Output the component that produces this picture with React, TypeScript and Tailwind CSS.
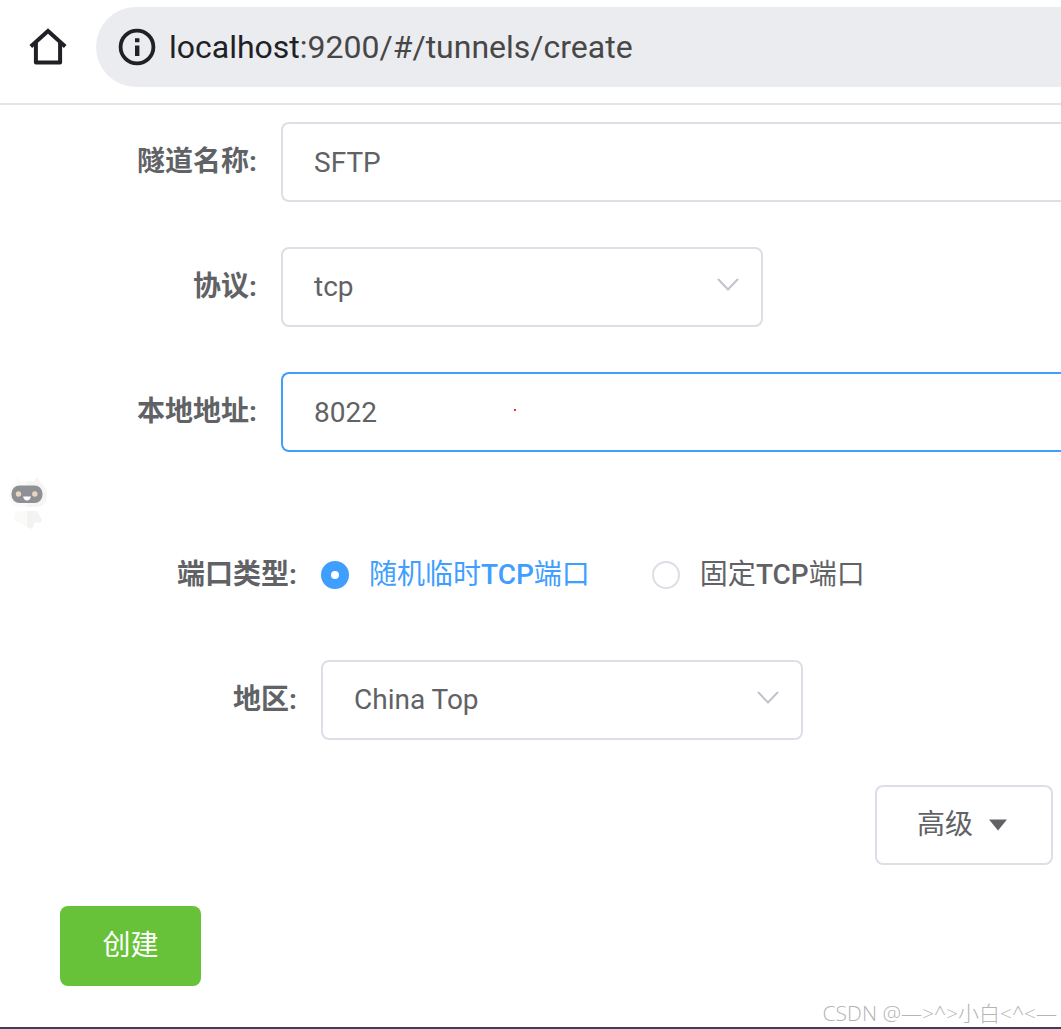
import { useState } from "react";
import type { ReactNode } from "react";

const protocols = ["tcp", "http", "udp"];
const regions = ["China Top", "China VIP", "United States"];
const portTypes = [
    { value: "random", prefix: "随机临时" },
    { value: "fixed", prefix: "固定" },
];

function AddressBar() {
    return (
        <header className="flex items-center border-b-2 border-[#e4e4e4] pt-[7px] pb-4">
            <a href="#/" aria-label="Home" className="flex w-24 shrink-0 justify-center">
                <svg width="38" height="38" viewBox="0 0 38 38" fill="none" stroke="#202124" strokeWidth="4" strokeLinejoin="round">
                    <path d="M1.8 18.6 19 3 36.2 18.6" strokeLinejoin="miter" />
                    <path d="M6.9 15V34.6H31.1V15" />
                </svg>
            </a>
            <div className="flex h-20 flex-1 items-center gap-[13px] rounded-l-full bg-[#ebecf0] pl-[22px]">
                <svg width="38" height="38" viewBox="0 0 38 38" className="shrink-0">
                    <circle cx="19" cy="19" r="16.4" fill="none" stroke="#202124" strokeWidth="3.8" />
                    <path d="M17 10.200h4.400v4h-4.400zM17 17.400h4.400v10.600h-4.400z" fill="#202124" />
                </svg>
                <span className="text-[32px] leading-10 whitespace-nowrap text-[#474747]">
                    <span className="text-[#202124]">localhost</span>:9200/#/tunnels/create
                </span>
            </div>
        </header>
    );
}

interface RowProps {
    label: string;
    htmlFor?: string;
    children: ReactNode;
}

function FormRow({ label, htmlFor, children }: RowProps) {
    return (
        <div className="flex gap-6">
            <label htmlFor={htmlFor} className="w-[257px] shrink-0 text-right font-bold leading-[80px]">
                {label}:
            </label>
            <div className="flex min-w-0 flex-1">{children}</div>
        </div>
    );
}

function TextField({ id, defaultValue, active }: { id: string; defaultValue: string; active?: boolean }) {
    return (
        <input
            id={id}
            type="text"
            defaultValue={defaultValue}
            className={`h-20 w-full rounded-l-lg border-2 border-r-0 bg-white pl-[31px] outline-none ${
                active ? "border-[#409eff]" : "border-[#dcdfe6]"
            }`}
        />
    );
}

function SelectField({ id, options }: { id: string; options: string[] }) {
    return (
        <div className="relative w-[482px]">
            <select id={id} className="h-20 w-full appearance-none rounded-lg border-2 border-[#dcdfe6] bg-white px-[31px] outline-none">
                {options.map((option) => (
                    <option key={option}>{option}</option>
                ))}
            </select>
            <svg
                width="22"
                height="14"
                viewBox="0 0 22 14"
                fill="none"
                stroke="#c0c4cc"
                strokeWidth="2"
                strokeLinecap="round"
                className="pointer-events-none absolute top-[31px] right-6"
            >
                <path d="M1.5 1.5 11 11.5 20.5 1.5" />
            </svg>
        </div>
    );
}

// Faded assistant that floats on the left edge
function Robot() {
    return (
        <svg width="38" height="54" viewBox="0 0 38 54" className="absolute top-[477px] left-[9px]">
            <path d="M6 6 8 1 12 4H25L28 0 31 5Q37 9 38 17Q38 30 26 30H10Q0 29 0 17Q1 9 6 6Z" fill="#fafaf9" />
            <path d="M18 4H25L28 0 31 5Q37 9 38 17Q38 30 26 30H18Z" fill="#f5f5f3" />
            <rect x="2.500" y="8.500" width="31" height="17.500" rx="8" fill="#8e9096" />
            <circle cx="9.500" cy="17" r="2.700" fill="#e9d6c1" />
            <circle cx="25.800" cy="17" r="2.700" fill="#e9d6c1" />
            <path d="M14 19.500H22Q21 23.500 18 23.500Q15 23.500 14 19.500Z" fill="#fff" />
            <path d="M5 37 10 34H18V50L5 43Z" fill="#fafaf9" />
            <path d="M18 34H28L33 43 31 46 26 45 23 52 18 50Z" fill="#f3f3f2" />
        </svg>
    );
}

export default function App() {
    const [portType, setPortType] = useState("random");

    return (
        <div className="relative overflow-hidden bg-white font-[Roboto,'Noto_Sans_CJK_SC',sans-serif] text-[28px] text-[#606266]">
            <AddressBar />
            <Robot />

            <form className="pt-[17px]" onSubmit={(e) => e.preventDefault()}>
                <div className="flex flex-col gap-[45px]">
                    <FormRow label="隧道名称" htmlFor="name">
                        <TextField id="name" defaultValue="SFTP" />
                    </FormRow>
                    <FormRow label="协议" htmlFor="protocol">
                        <SelectField id="protocol" options={protocols} />
                    </FormRow>
                    <FormRow label="本地地址" htmlFor="address">
                        <div className="relative flex-1">
                            <TextField id="address" defaultValue="8022" active />
                            <span className="absolute top-[37px] left-[233px] size-0.5 bg-[#ff2a2a]" />
                        </div>
                    </FormRow>
                </div>

                <div className="mt-[83px] flex flex-col gap-[45px] pl-10">
                    <FormRow label="端口类型">
                        <div className="flex items-center gap-[62px]">
                            {portTypes.map(({ value, prefix }) => (
                                <label
                                    key={value}
                                    className={`flex items-center gap-5 whitespace-nowrap ${portType === value ? "text-[#409eff]" : ""}`}
                                >
                                    <input
                                        type="radio"
                                        name="portType"
                                        value={value}
                                        checked={portType === value}
                                        onChange={() => setPortType(value)}
                                        className="size-7 shrink-0 appearance-none rounded-full border-2 border-[#dcdfe6] bg-white checked:border-[10px] checked:border-[#409eff]"
                                    />
                                    <span>
                                        {prefix}
                                        <span className="font-medium">TCP</span>端口
                                    </span>
                                </label>
                            ))}
                        </div>
                    </FormRow>
                    <FormRow label="地区" htmlFor="region">
                        <SelectField id="region" options={regions} />
                    </FormRow>
                </div>

                <div className="mt-[45px] flex justify-end pr-2">
                    <button type="button" className="flex h-20 w-[178px] items-center justify-center gap-4 rounded-lg border-2 border-[#dcdfe6] pr-1">
                        高级
                        <svg width="18" height="12" viewBox="0 0 18 12" fill="#606266">
                            <path d="M0 0.500H18L9 11.500Z" />
                        </svg>
                    </button>
                </div>

                <div className="mt-[41px] pl-[60px]">
                    <button type="submit" className="h-20 w-[141px] rounded-lg bg-[#67c23a] text-white">
                        创建
                    </button>
                </div>
            </form>

            <footer className="mt-[13px] border-b-2 border-[#3b3f5c] pr-1 text-right font-['Open_Sans','Noto_Sans_CJK_SC',sans-serif] text-[21px] leading-7 font-light text-[#b4b4b4]">
                CSDN @—&gt;^&gt;小白&lt;^&lt;—
            </footer>
        </div>
    );
}
